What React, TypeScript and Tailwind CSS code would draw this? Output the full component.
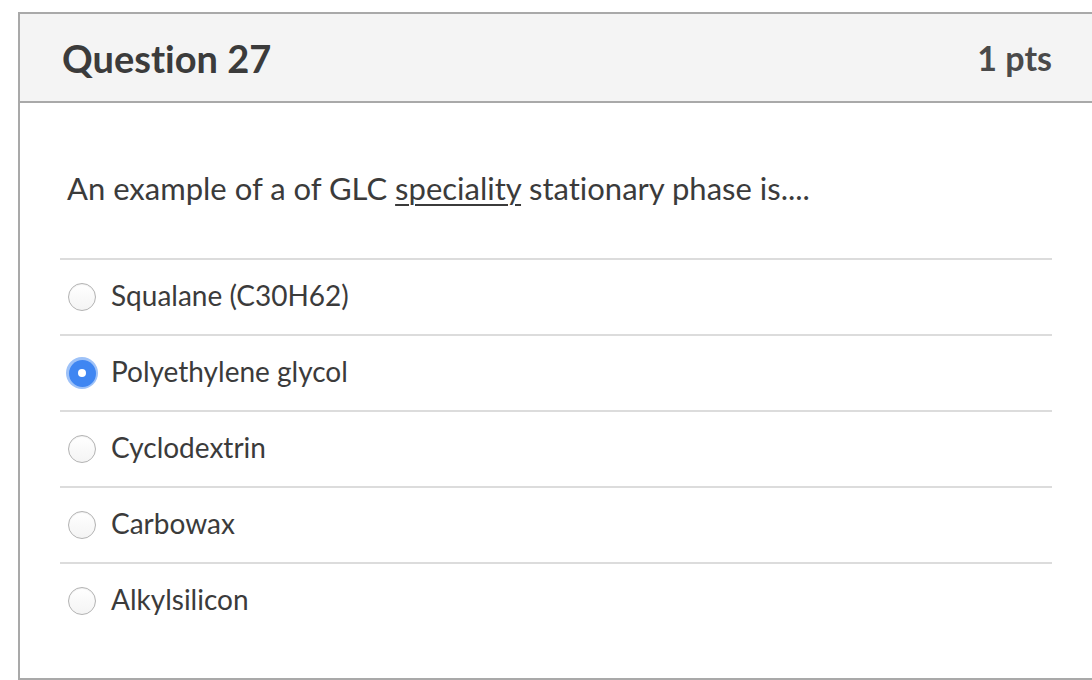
const OPTIONS = [
  { id: 'a', label: 'Squalane (C30H62)', checked: false },
  { id: 'b', label: 'Polyethylene glycol', checked: true },
  { id: 'c', label: 'Cyclodextrin', checked: false },
  { id: 'd', label: 'Carbowax', checked: false },
  { id: 'e', label: 'Alkylsilicon', checked: false },
]

function Radio({ checked }: { checked: boolean }) {
  if (checked) {
    return (
      <span className="flex h-[32px] w-[32px] items-center justify-center rounded-full bg-[#9ec2f8]">
        <span className="flex h-[27px] w-[27px] items-center justify-center rounded-full bg-[#3f86f2]">
          <span className="h-[8px] w-[8px] rounded-full bg-white" />
        </span>
      </span>
    )
  }
  return (
    <span className="flex h-[32px] w-[32px] items-center justify-center">
      <span className="h-[28px] w-[28px] rounded-full border border-[#b3b3b3] bg-gradient-to-b from-white to-[#f4f4f4] shadow-[inset_0_1px_1px_rgba(0,0,0,0.06)]" />
    </span>
  )
}

export default function App() {
  return (
    <div
      className="h-[680px] w-[1092px] overflow-hidden bg-white [font-variant-ligatures:none]"
      style={{ fontFamily: 'Lato, "Open Sans", Arial, sans-serif' }}
    >
      <div className="ml-[18px] mt-[12px] h-[668px] w-[1074px] border-2 border-r-0 border-[#a9a9a9]">
        <div className="flex h-[89px] items-center justify-between border-b-2 border-[#a9a9a9] bg-[#f4f4f4] pl-[42px] pr-[40px]">
          <h2 className="text-[38px] font-bold leading-none text-[#3b3b3b]">Question 27</h2>
          <span className="text-[34px] font-bold leading-none text-[#4a4a4a]">1 pts</span>
        </div>

        <div className="px-[40px]">
          <p className="pb-[52px] pl-[7px] pt-[67px] text-[31px] leading-[36px] text-[#3b3b3b]">
            An example of a of GLC <u className="underline-offset-[4px] decoration-[1.5px]">speciality</u> stationary phase is....
          </p>

          <div>
            {OPTIONS.map((opt) => (
              <label key={opt.id} className="flex h-[76px] items-center gap-[13px] border-t-2 border-[#dcdcdc] pl-[6px]">
                <Radio checked={opt.checked} />
                <span className="pb-[4px] text-[28px] leading-none text-[#3b3b3b]">{opt.label}</span>
              </label>
            ))}
          </div>
        </div>
      </div>
    </div>
  )
}
